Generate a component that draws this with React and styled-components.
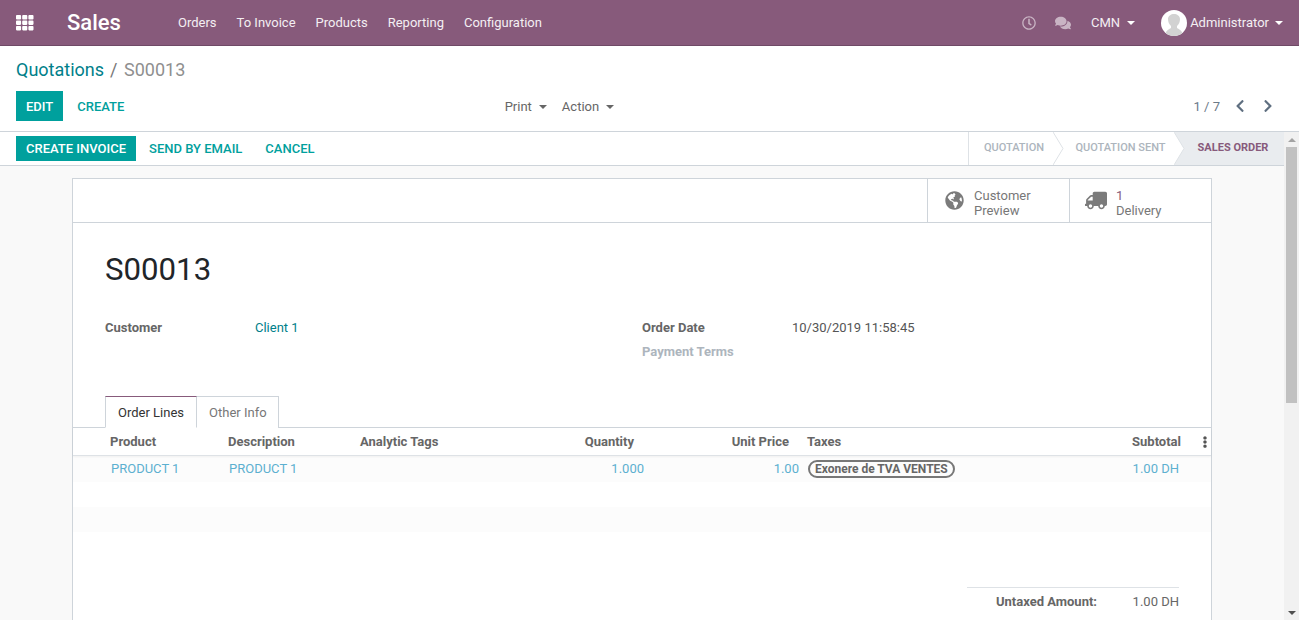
import React from 'react';
import styled, { createGlobalStyle } from 'styled-components';
import { FaTh, FaRegClock, FaComments, FaChevronLeft, FaChevronRight, FaGlobeAmericas, FaTruck, FaEllipsisV } from 'react-icons/fa';

const Global = createGlobalStyle`
  html, body { margin: 0; padding: 0; height: 620px; overflow: hidden; background: #fff; }
  body { font-family: Roboto, "Noto Sans", sans-serif; font-size: 13px; color: #666; line-height: 1.5; }
  * { box-sizing: border-box; }
`;
const Page = styled.div`display:flex;flex-direction:column;width:1299px;height:620px;overflow:hidden;`;
const Nav = styled.header`flex:none;height:46px;background:#875a7b;border-bottom:1px solid #6f4a66;display:flex;align-items:center;color:#fff;`;
const GridBtn = styled.span`display:flex;width:50px;justify-content:center;margin-right:1px;font-size:17.5px;`;
const Brand = styled.span`font-size:22px;font-weight:500;width:117px;padding-left:16px;line-height:1;`;
const NavItem = styled.span`padding:0 10px;font-size:13px;color:#f4eff3;`;
const Spacer = styled.span`flex:1;`;
const NavIcon = styled.span`display:flex;color:#c9b4c4;font-size:${p=>p.$s}px;margin-right:${p=>p.$m}px;`;
const Caret = styled.i`display:inline-block;width:0;height:0;border-left:4.5px solid transparent;border-right:4.5px solid transparent;border-top:4.5px solid ${p=>p.$c||'#fff'};margin-left:${p=>p.$m||7}px;vertical-align:2px;`;
const Avatar = styled.svg`width:26px;height:26px;border-radius:50%;margin-left:26px;margin-right:3px;display:block;`;
const NavDrop = styled.span`font-size:13px;color:#f4eff3;`;
const Admin = styled(NavDrop)`margin-right:16px;`;

const Panel = styled.section`flex:none;height:86px;padding:0 16px;border-bottom:1px solid #ced4da;background:#fff;`;
const Crumbs = styled.div`height:45px;padding-top:10px;font-size:18px;line-height:27px;color:#8f8f8f;`;
const CrumbLink = styled.span`color:#00808a;`;
const CrumbSep = styled.span`color:#777;padding:0 6.6px 0 6px;`;
const PanelRow = styled.div`height:30px;display:grid;grid-template-columns:1fr 1fr 1fr;align-items:center;margin-right:-1px;`;
const Left = styled.div`display:flex;align-items:center;`;
const Mid = styled.div`display:flex;align-items:center;gap:15px;padding-left:66px;padding-top:1px;`;
const Right = styled.div`display:flex;justify-content:flex-end;align-items:center;color:#6c7a89;padding-right:9px;`;
const Primary = styled.button`border:0;border-radius:0;background:#00a09d;color:#fff;font:500 13px Roboto,sans-serif;height:${p=>p.$h}px;padding:0 10px;text-transform:uppercase;`;
const LinkBtn = styled.button`border:0;background:none;color:#00a09d;font:500 13px Roboto,sans-serif;padding:0;margin-left:${p=>p.$m}px;text-transform:uppercase;`;
const Drop = styled.span`font-size:13px;color:#666;`;
const Pager = styled.span`font-size:13px;margin-right:13px;padding-top:2px;`;
const Chev = styled.span`display:flex;color:#5f6f80;font-size:14px;margin-left:${p=>p.$m||0}px;`;

const Body = styled.div`flex:1;display:flex;min-height:0;`;
const Content = styled.div`flex:1;min-width:0;background:#f9f9f9;overflow:hidden;`;
const StatusBar = styled.div`height:34px;background:#fff;border-bottom:1px solid #ced4da;display:flex;align-items:center;justify-content:space-between;padding-left:16px;`;
const Actions = styled.div`display:flex;align-items:center;`;
const Stages = styled.div`display:flex;align-self:stretch;border-left:1px solid #dee2e6;`;
const Stage = styled.div`position:relative;display:flex;align-items:center;justify-content:center;height:33px;width:${p=>p.$w}px;font-size:11px;font-weight:${p=>p.$on?700:500};text-transform:uppercase;color:${p=>p.$on?'#875a7b':'#adb5bd'};background:${p=>p.$on?'#e9ecef':'#fff'};padding-left:${p=>p.$pl||0}px;`;
const Arrow = styled.svg`position:absolute;top:0;right:-10px;width:11px;height:33px;z-index:1;`;

const Sheet = styled.div`margin:12px 72px 0;background:#fff;border:1px solid #ced4da;height:900px;`;
const ButtonBox = styled.div`height:44px;border-bottom:1px solid #ced4da;display:flex;justify-content:flex-end;`;
const StatBtn = styled.div`width:142px;border-left:1px solid #ced4da;display:flex;align-items:center;padding-left:15px;gap:9px;`;
const StatIcon = styled.span`display:flex;color:#7b7b7b;font-size:${p=>p.$s}px;width:22px;justify-content:center;`;
const StatText = styled.div`font-size:13px;line-height:15px;color:#777;padding-top:4px;`;
const StatNum = styled.div`color:#875a7b;`;
const FormBody = styled.div`padding:0 32px;`;
const Title = styled.h1`margin:0;padding-top:26px;font-size:31.2px;font-weight:400;line-height:42px;color:#212529;height:93px;`;
const Fields = styled.div`display:grid;grid-template-columns:537px 1fr;height:80px;`;
const Field = styled.div`display:grid;grid-template-columns:150px 1fr;height:24px;align-items:center;`;
const Label = styled.span`font-weight:700;color:${p=>p.$light?'#adb5bd':'#666'};font-size:13px;`;
const FieldLink = styled.span`color:#00808a;`;
const FieldVal = styled.span`color:#555;`;
const Tabs = styled.div`display:flex;padding-left:32px;height:32px;border-bottom:1px solid #ced4da;`;
const Tab = styled.div`height:32px;padding:${p=>p.$on?'1px':'0'} ${p=>p.$on?12:11}px 0 12px;display:flex;align-items:center;background:#fff;font-size:13px;color:${p=>p.$on?'#333':'#777'};border:1px solid #ced4da;border-left-width:${p=>p.$on?1:0}px;border-top-color:${p=>p.$on?'#875a7b':'#ced4da'};border-bottom:${p=>p.$on?'1px solid #fff':'0'};`;
const Row = styled.div`display:grid;grid-template-columns:118px 132px 169px 105px 155px 300px 1fr;align-items:center;padding-left:37px;`;
const HeadRow = styled(Row)`height:28px;border-bottom:1px solid #dee2e6;box-shadow:0 1px 2px rgba(0,0,0,.05);position:relative;`;
const DataRow = styled(Row)`height:26px;background:#fcfcfc;`;
const Th = styled.span`font-weight:700;color:#666;text-align:${p=>p.$r?'right':'left'};padding-right:${p=>p.$pr||0}px;padding-left:${p=>p.$pl||0}px;`;
const Td = styled.span`color:#5cb0d0;text-align:${p=>p.$r?'right':'left'};padding-right:${p=>p.$pr||0}px;padding-left:${p=>p.$pl||0}px;margin-right:${p=>p.$mr||0}px;`;
const Dots = styled.span`position:absolute;right:0;top:8px;display:flex;color:#555;font-size:12px;`;
const Pill = styled.span`display:inline-block;border:2px solid #777;border-radius:10px;font-weight:700;color:#666;font-size:12px;line-height:14px;padding:0 5px;`;
const EmptyRow = styled.div`height:${p=>p.$h}px;background:${p=>p.$g?'#fcfcfc':'#fff'};`;
const Totals = styled.div`margin:55px 32px 0 auto;width:212px;border-top:1px solid #dee2e6;height:28px;display:grid;grid-template-columns:130px 1fr;align-items:center;`;
const TotLabel = styled.span`font-weight:700;text-align:right;color:#666;`;
const TotVal = styled.span`text-align:right;color:#666;`;

const Scroll = styled.div`flex:none;width:15px;background:#f1f1f1;display:flex;flex-direction:column;align-items:center;`;
const ScrollBtn = styled.div`height:15px;display:flex;align-items:center;justify-content:center;flex:none;`;
const Tri = styled.i`width:0;height:0;border-left:4px solid transparent;border-right:4px solid transparent;${p=>p.$up?'border-bottom:4px solid #a3a3a3;':'border-top:4px solid #505050;'}`;
const Thumb = styled.div`width:11px;height:256px;background:#c1c1c1;flex:none;`;
const ScrollFill = styled.div`flex:1;`;

export default function App() {
  return (
    <Page>
      <Global />
      <Nav>
        <GridBtn><FaTh /></GridBtn>
        <Brand>Sales</Brand>
        <NavItem>Orders</NavItem>
        <NavItem>To Invoice</NavItem>
        <NavItem>Products</NavItem>
        <NavItem>Reporting</NavItem>
        <NavItem>Configuration</NavItem>
        <Spacer />
        <NavIcon $s={14} $m={19}><FaRegClock /></NavIcon>
        <NavIcon $s={16} $m={20}><FaComments /></NavIcon>
        <NavDrop>CMN<Caret /></NavDrop>
        <Avatar viewBox="0 0 26 26">
          <rect width="26" height="26" fill="#fff" />
          <path d="M4 26c0-5 4-7 6-8v-2c-2-2-3-4-3-7 0-3 3-5 6-5s6 2 6 5c0 3-1 5-3 7v2c2 1 6 3 6 8z" fill="#d2d2d2" />
        </Avatar>
        <Admin>Administrator<Caret $m={6} /></Admin>
      </Nav>
      <Panel>
        <Crumbs><CrumbLink>Quotations</CrumbLink><CrumbSep>/</CrumbSep>S00013</Crumbs>
        <PanelRow>
          <Left>
            <Primary $h={30}>Edit</Primary>
            <LinkBtn $m={14}>Create</LinkBtn>
          </Left>
          <Mid>
            <Drop>Print<Caret $c="#666" /></Drop>
            <Drop>Action<Caret $c="#666" /></Drop>
          </Mid>
          <Right>
            <Pager>1 / 7</Pager>
            <Chev><FaChevronLeft /></Chev>
            <Chev $m={14}><FaChevronRight /></Chev>
          </Right>
        </PanelRow>
      </Panel>
      <Body>
        <Content>
          <StatusBar>
            <Actions>
              <Primary $h={25}>Create Invoice</Primary>
              <LinkBtn $m={13}>Send by email</LinkBtn>
              <LinkBtn $m={23}>Cancel</LinkBtn>
            </Actions>
            <Stages>
              <Stage $w={85} $pl={5}>Quotation<Arrow viewBox="0 0 11 33"><path d="M0 0l10 16.5L0 33" fill="#fff" stroke="#dee2e6" /></Arrow></Stage>
              <Stage $w={121} $pl={12}>Quotation sent<Arrow viewBox="0 0 11 33"><path d="M0 0l10 16.5L0 33" fill="#fff" stroke="#dee2e6" /></Arrow></Stage>
              <Stage $w={109} $on $pl={7}>Sales Order</Stage>
            </Stages>
          </StatusBar>
          <Sheet>
            <ButtonBox>
              <StatBtn>
                <StatIcon $s={19}><FaGlobeAmericas /></StatIcon>
                <StatText>Customer<br />Preview</StatText>
              </StatBtn>
              <StatBtn>
                <StatIcon $s={23}><FaTruck style={{ transform: 'scaleX(-1)' }} /></StatIcon>
                <StatText><StatNum>1</StatNum>Delivery</StatText>
              </StatBtn>
            </ButtonBox>
            <FormBody>
              <Title>S00013</Title>
              <Fields>
                <div>
                  <Field><Label>Customer</Label><FieldLink>Client 1</FieldLink></Field>
                </div>
                <div>
                  <Field><Label>Order Date</Label><FieldVal>10/30/2019 11:58:45</FieldVal></Field>
                  <Field><Label $light>Payment Terms</Label></Field>
                </div>
              </Fields>
            </FormBody>
            <Tabs>
              <Tab $on>Order Lines</Tab>
              <Tab>Other Info</Tab>
            </Tabs>
            <div>
              <HeadRow>
                <Th>Product</Th>
                <Th>Description</Th>
                <Th>Analytic Tags</Th>
                <Th $r>Quantity</Th>
                <Th $r>Unit Price</Th>
                <Th $pl={18}>Taxes</Th>
                <Th $r $pr={30}>Subtotal</Th>
                <Dots><FaEllipsisV /></Dots>
              </HeadRow>
              <DataRow>
                <Td $pl={1}>PRODUCT 1</Td>
                <Td $pl={1}>PRODUCT 1</Td>
                <Td />
                <Td $r $mr={-10}>1.000</Td>
                <Td $r $mr={-10}>1.00</Td>
                <Td $pl={19}><Pill>Exonere de TVA VENTES</Pill></Td>
                <Td $r $pr={32}>1.00 DH</Td>
              </DataRow>
              <EmptyRow $h={25} />
              <EmptyRow $h={25} $g />
            </div>
            <Totals>
              <TotLabel>Untaxed Amount:</TotLabel>
              <TotVal>1.00 DH</TotVal>
            </Totals>
          </Sheet>
        </Content>
        <Scroll>
          <ScrollBtn><Tri $up /></ScrollBtn>
          <Thumb />
          <ScrollFill />
          <ScrollBtn><Tri /></ScrollBtn>
        </Scroll>
      </Body>
    </Page>
  );
}
